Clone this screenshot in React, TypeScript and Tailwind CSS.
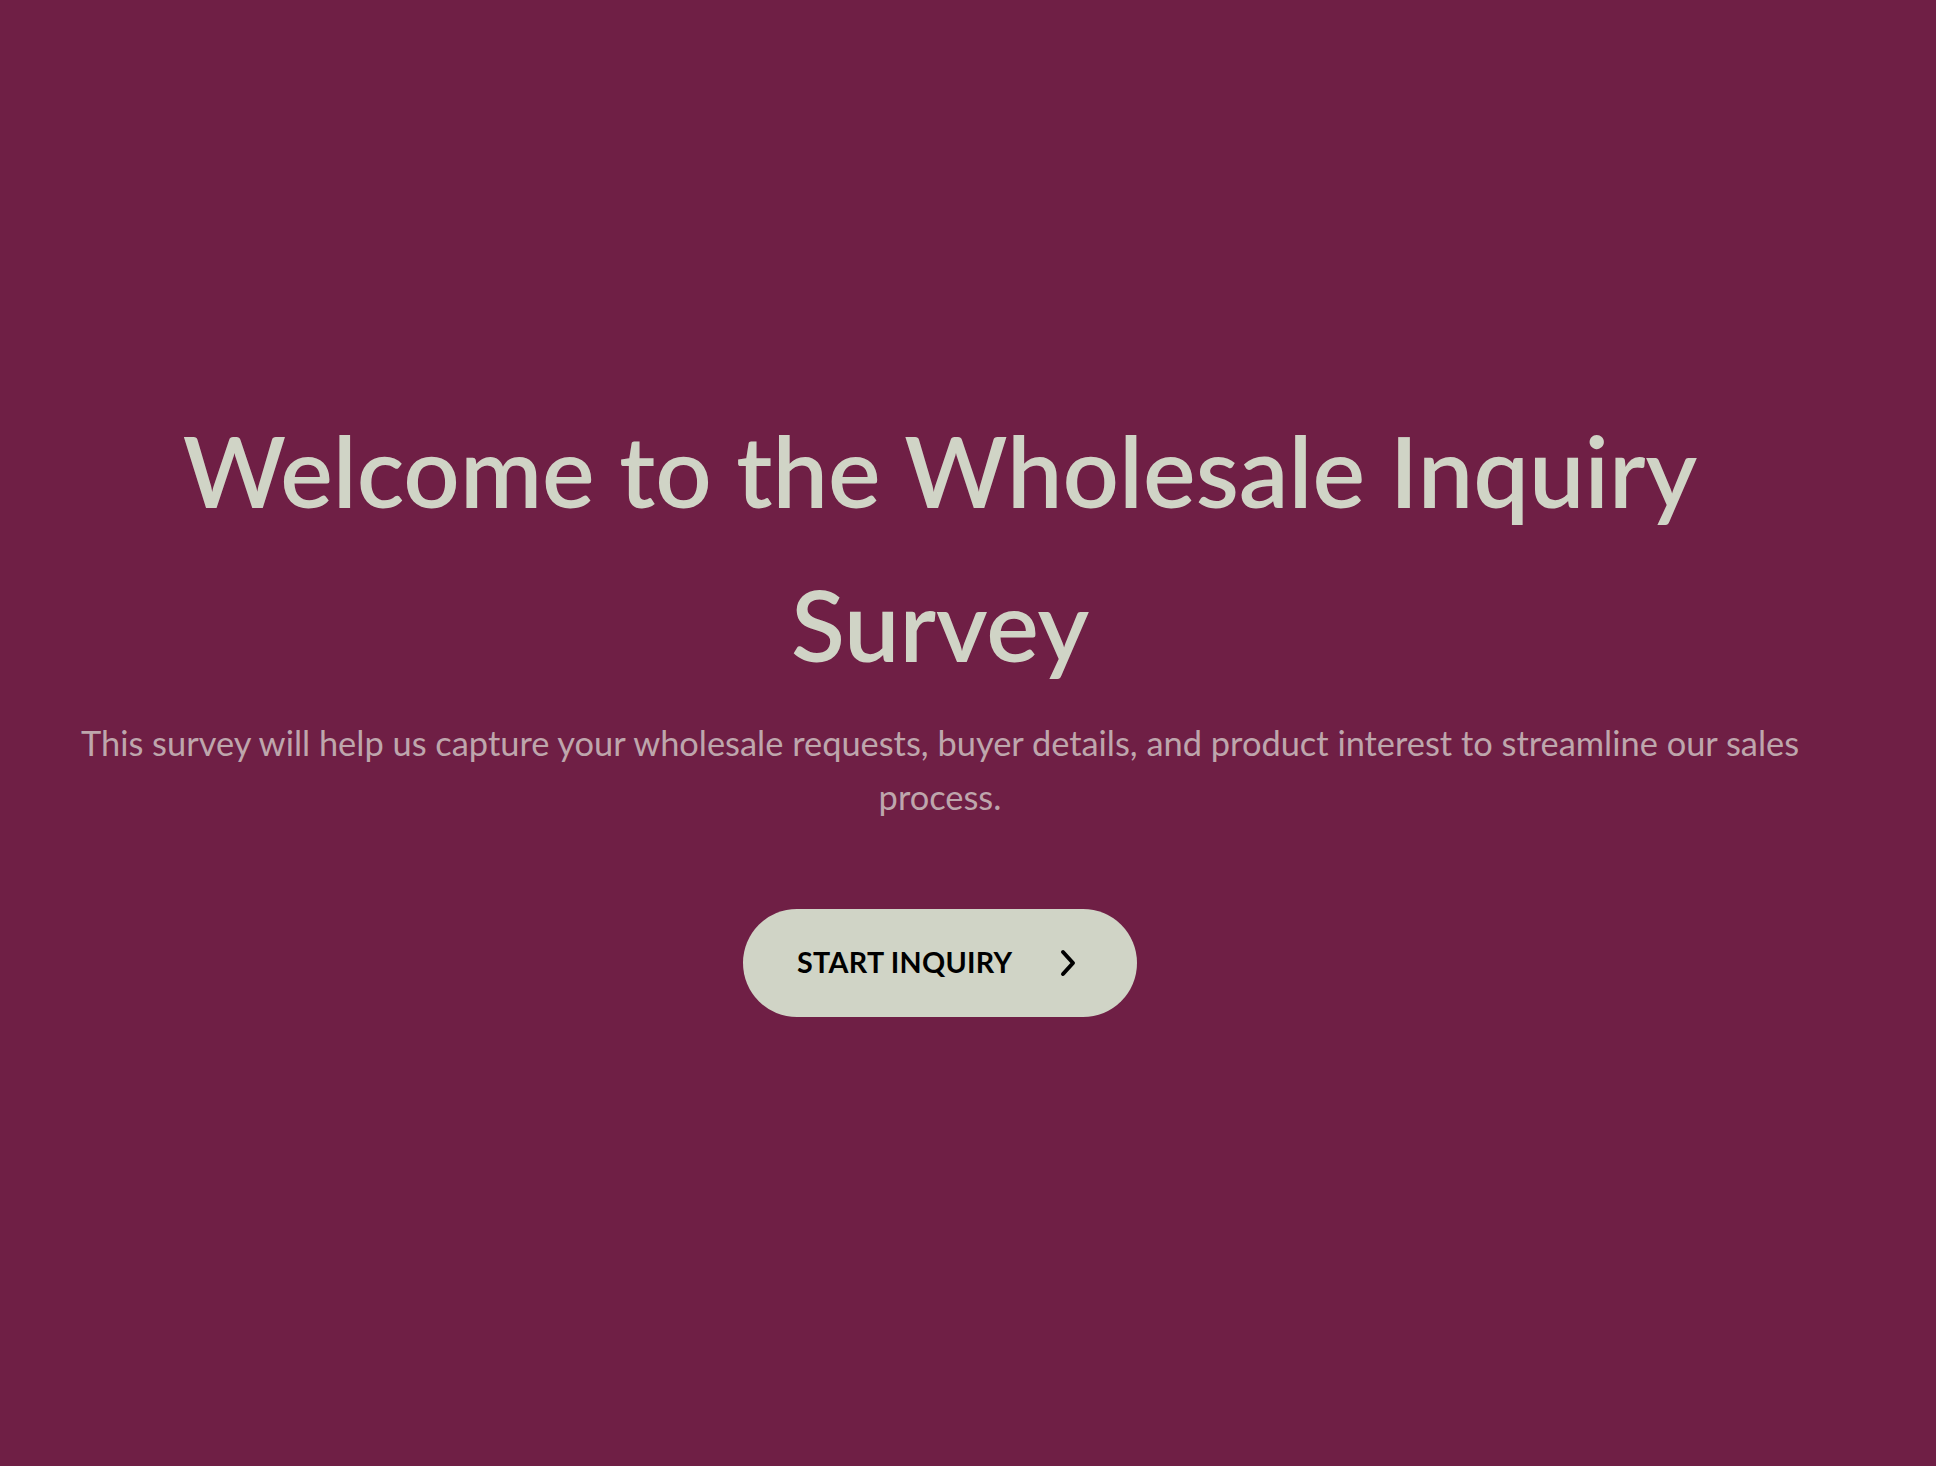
import React from "react";

export default function App() {
  return (
    <div
      className="min-h-screen w-full bg-[#6f1f45] flex flex-col items-center justify-center pb-[57px] pr-[56px]"
      style={{ fontFamily: "Lato, 'Noto Sans', sans-serif" }}
    >
      <h1 className="text-[99px] leading-[154px] font-semibold text-[#d0d4c6] text-center max-w-[1600px] px-4">
        Welcome to the Wholesale Inquiry Survey
      </h1>
      <p className="mt-[15px] text-[34.4px] leading-[54px] text-[#bea6ac] text-center max-w-[1780px] px-4">
        This survey will help us capture your wholesale requests, buyer details, and product interest to streamline our sales process.
      </p>
      <button className="mt-[85px] h-[108px] w-[394px] rounded-full bg-[#d0d4c6] flex items-center pl-[54px] pr-[61px] text-black">
        <span className="text-[28.7px] font-bold tracking-[0.01em]">START INQUIRY</span>
        <svg
          className="ml-auto"
          width="16"
          height="28"
          viewBox="0 0 16 28"
          fill="none"
          stroke="currentColor"
          strokeWidth="4"
          strokeLinecap="round"
          strokeLinejoin="round"
        >
          <path d="M3 3 L13 14 L3 25" />
        </svg>
      </button>
    </div>
  );
}
